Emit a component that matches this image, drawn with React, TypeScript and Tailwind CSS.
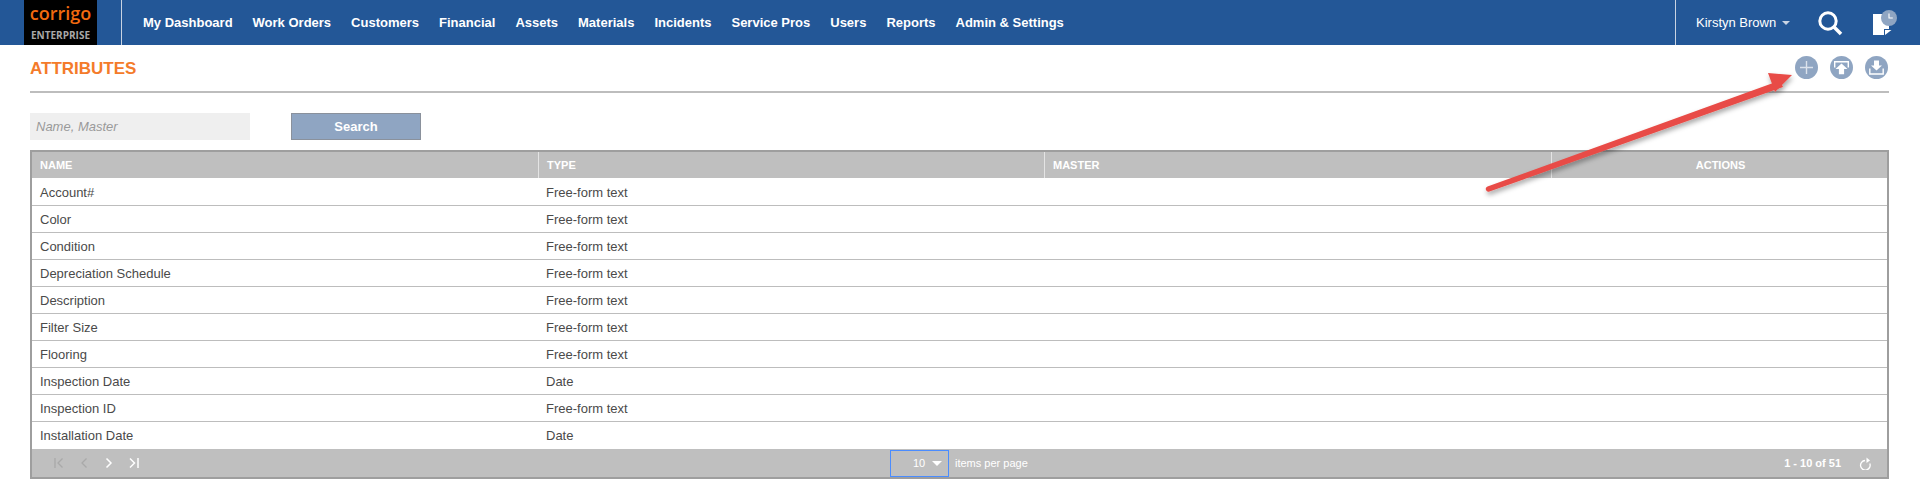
const navItems = ['My Dashboard', 'Work Orders', 'Customers', 'Financial', 'Assets', 'Materials', 'Incidents', 'Service Pros', 'Users', 'Reports', 'Admin & Settings']

const rows = [
  ['Account#', 'Free-form text'],
  ['Color', 'Free-form text'],
  ['Condition', 'Free-form text'],
  ['Depreciation Schedule', 'Free-form text'],
  ['Description', 'Free-form text'],
  ['Filter Size', 'Free-form text'],
  ['Flooring', 'Free-form text'],
  ['Inspection Date', 'Date'],
  ['Inspection ID', 'Free-form text'],
  ['Installation Date', 'Date'],
]

const Header = () => (
  <header className="flex h-[45px] items-stretch bg-[#235797] pl-6 text-white">
    <div className="flex w-[73px] flex-col items-center bg-black">
      <span className="mt-[1px] text-[18px] leading-[24px] font-semibold text-[#f26a0f] font-['Open_Sans',sans-serif]">corrigo</span>
      <span className="mt-[4px] text-[10px] leading-[12px] font-bold text-[#a8a8a8] font-['Open_Sans',sans-serif]">ENTERPRISE</span>
    </div>
    <div className="ml-[24px] flex flex-1 items-center gap-[20px] border-l border-[#c8d3e2] pl-[21px]">
      {navItems.map((item) => (
        <a key={item} className="text-[13px] font-bold">{item}</a>
      ))}
    </div>
    <div className="flex w-[245px] items-center border-l border-[#c8d3e2] pl-5">
      <span className="text-[13px]">Kirstyn Brown</span>
      <span className="ml-[6px] h-0 w-0 border-x-[4px] border-t-[4px] border-x-transparent border-t-[#c9d4e4]" />
      <svg className="ml-[27px]" width="26" height="26" viewBox="0 0 26 26" fill="none" stroke="white">
        <circle cx="11" cy="11" r="8.2" strokeWidth="3" />
        <path d="M17 17l7 7" strokeWidth="3.6" />
      </svg>
      <svg className="ml-[28px]" width="26" height="26" viewBox="0 0 26 26">
        <path d="M2 4h16v15h-5v6H2z" fill="white" />
        <path d="M14 20h6.500l-6.500 5z" fill="white" />
        <circle cx="18" cy="8" r="8" fill="#8fa5c2" />
        <path d="M18 3.500V8h3.800" fill="none" stroke="white" strokeWidth="1.100" />
      </svg>
    </div>
  </header>
)

const RoundIcon = ({ children }: { children: React.ReactNode }) => (
  <span className="flex h-[23px] w-[23px] items-center justify-center rounded-full bg-[#8fa5c2]">
    <svg width="23" height="23" viewBox="0 0 23 23">{children}</svg>
  </span>
)

const TitleBar = () => (
  <div className="flex h-[48px] items-center justify-between border-b-2 border-[#bdbdbd]">
    <h1 className="pt-[2px] text-[17px] font-bold text-[#f47b2a]">ATTRIBUTES</h1>
    <div className="mr-[1px] mt-[-2px] flex gap-3">
      <RoundIcon>
        <path d="M11.500 5v13M5 11.500h13" stroke="#dbe2ec" strokeWidth="1.400" />
      </RoundIcon>
      <RoundIcon>
        <path d="M4.700 11.500V5.700h13.600v5.800" fill="none" stroke="white" strokeWidth="1.400" />
        <path d="M5.500 13l6-5.500 6 5.500h-3.400v5.200H8.900V13z" fill="white" />
      </RoundIcon>
      <RoundIcon>
        <path d="M9 4.500h5v5h3l-5.500 5-5.500-5h3z" fill="white" />
        <path d="M4.800 12.500v5.500h13.400v-5.500" fill="none" stroke="white" strokeWidth="1.400" />
      </RoundIcon>
    </div>
  </div>
)

const Table = () => (
  <div className="mt-[10px] border-2 border-[#9e9e9e] text-[13px] text-[#4a4a4a]">
    <div className="grid h-[27px] grid-cols-[507px_506px_507px_1fr] items-center border-b border-white bg-[#bfbfbf] text-[11px] font-bold text-white">
      <div className="flex h-full items-center border-r border-[#e4e4e4] px-2">NAME</div>
      <div className="flex h-full items-center border-r border-[#e4e4e4] px-2">TYPE</div>
      <div className="flex h-full items-center border-r border-[#e4e4e4] px-2">MASTER</div>
      <div className="pl-[2px] text-center">ACTIONS</div>
    </div>
    {rows.map(([name, type], i) => (
      <div key={name} className={`grid h-[27px] grid-cols-[506px_506px_507px_1fr] items-center pt-[1px] ${i < 9 ? 'border-b border-[#bdbdbd]' : ''}`}>
        <div className="px-2">{name}</div>
        <div className="px-2">{type}</div>
      </div>
    ))}
    <div className="flex h-[28px] items-center bg-[#bfbfbf] text-[11px] text-white">
      <div className="flex w-[858px] items-center pl-[21px]">
        <svg width="12" height="12" viewBox="0 0 12 12" fill="none" stroke="#a9a9a9" strokeWidth="1.300"><path d="M2 1v10M9.500 1.500L5 6l4.500 4.500" /></svg>
        <svg className="ml-[13px]" width="12" height="12" viewBox="0 0 12 12" fill="none" stroke="#a9a9a9" strokeWidth="1.300"><path d="M8.500 1.500L4 6l4.500 4.500" /></svg>
        <svg className="ml-[13px]" width="12" height="12" viewBox="0 0 12 12" fill="none" stroke="white" strokeWidth="1.500"><path d="M3.500 1.500L8 6l-4.500 4.500" /></svg>
        <svg className="ml-[13px]" width="12" height="12" viewBox="0 0 12 12" fill="none" stroke="white" strokeWidth="1.500"><path d="M2 1.500L6.500 6 2 10.500M10 1v10" /></svg>
      </div>
      <div className="flex h-[27px] w-[59px] items-center border border-[#4a8cff] pl-[22px]">
        <span>10</span>
        <span className="ml-[7px] h-0 w-0 border-x-[5px] border-t-[5px] border-x-transparent border-t-white" />
      </div>
      <span className="ml-[6px]">items per page</span>
      <span className="ml-auto font-bold">1 - 10 of 51</span>
      <svg className="ml-[18px] mr-[15px]" width="13" height="13" viewBox="0 0 13 13" fill="none" stroke="white" strokeWidth="1.300">
        <path d="M10.800 6.500A4.800 4.800 0 1 1 6 3.500" />
        <path d="M7.500 0.500l3.500 3-3.500 2.500z" fill="white" stroke="none" />
      </svg>
    </div>
  </div>
)

const App = () => {
  return (
    <div className="relative h-[497px] w-[1920px] overflow-hidden bg-white font-['Liberation_Sans',sans-serif]">
      <Header />
      <main className="w-[1889px] pl-[30px]">
        <TitleBar />
        <div className="mt-[20px] flex items-stretch">
          <div className="flex h-[27px] w-[220px] items-center bg-[#efefef] px-[6px] text-[13px] italic text-[#9a9a9a]">Name, Master</div>
          <button className="ml-[41px] w-[130px] border border-[#8a919c] bg-[#8fa5c2] text-[13px] font-bold text-white">Search</button>
        </div>
        <Table />
      </main>
      {/* red annotation arrow */}
      <svg className="pointer-events-none absolute left-0 top-0" width="1920" height="497" fill="none">
        <defs>
          <filter id="arrowShadow" x="-5%" y="-20%" width="110%" height="140%">
            <feDropShadow dx="1" dy="3" stdDeviation="2.500" floodColor="#000" floodOpacity="0.35" />
          </filter>
        </defs>
        <g filter="url(#arrowShadow)">
          <path d="M1487.500 186.500L1780 80.500L1783 87L1489.500 191.500a2.500 2.500 0 0 1-2-5z" fill="#e84c46" />
          <path d="M1768 73L1792 75L1775 92z" fill="#e84c46" />
        </g>
      </svg>
    </div>
  )
}

export default App
